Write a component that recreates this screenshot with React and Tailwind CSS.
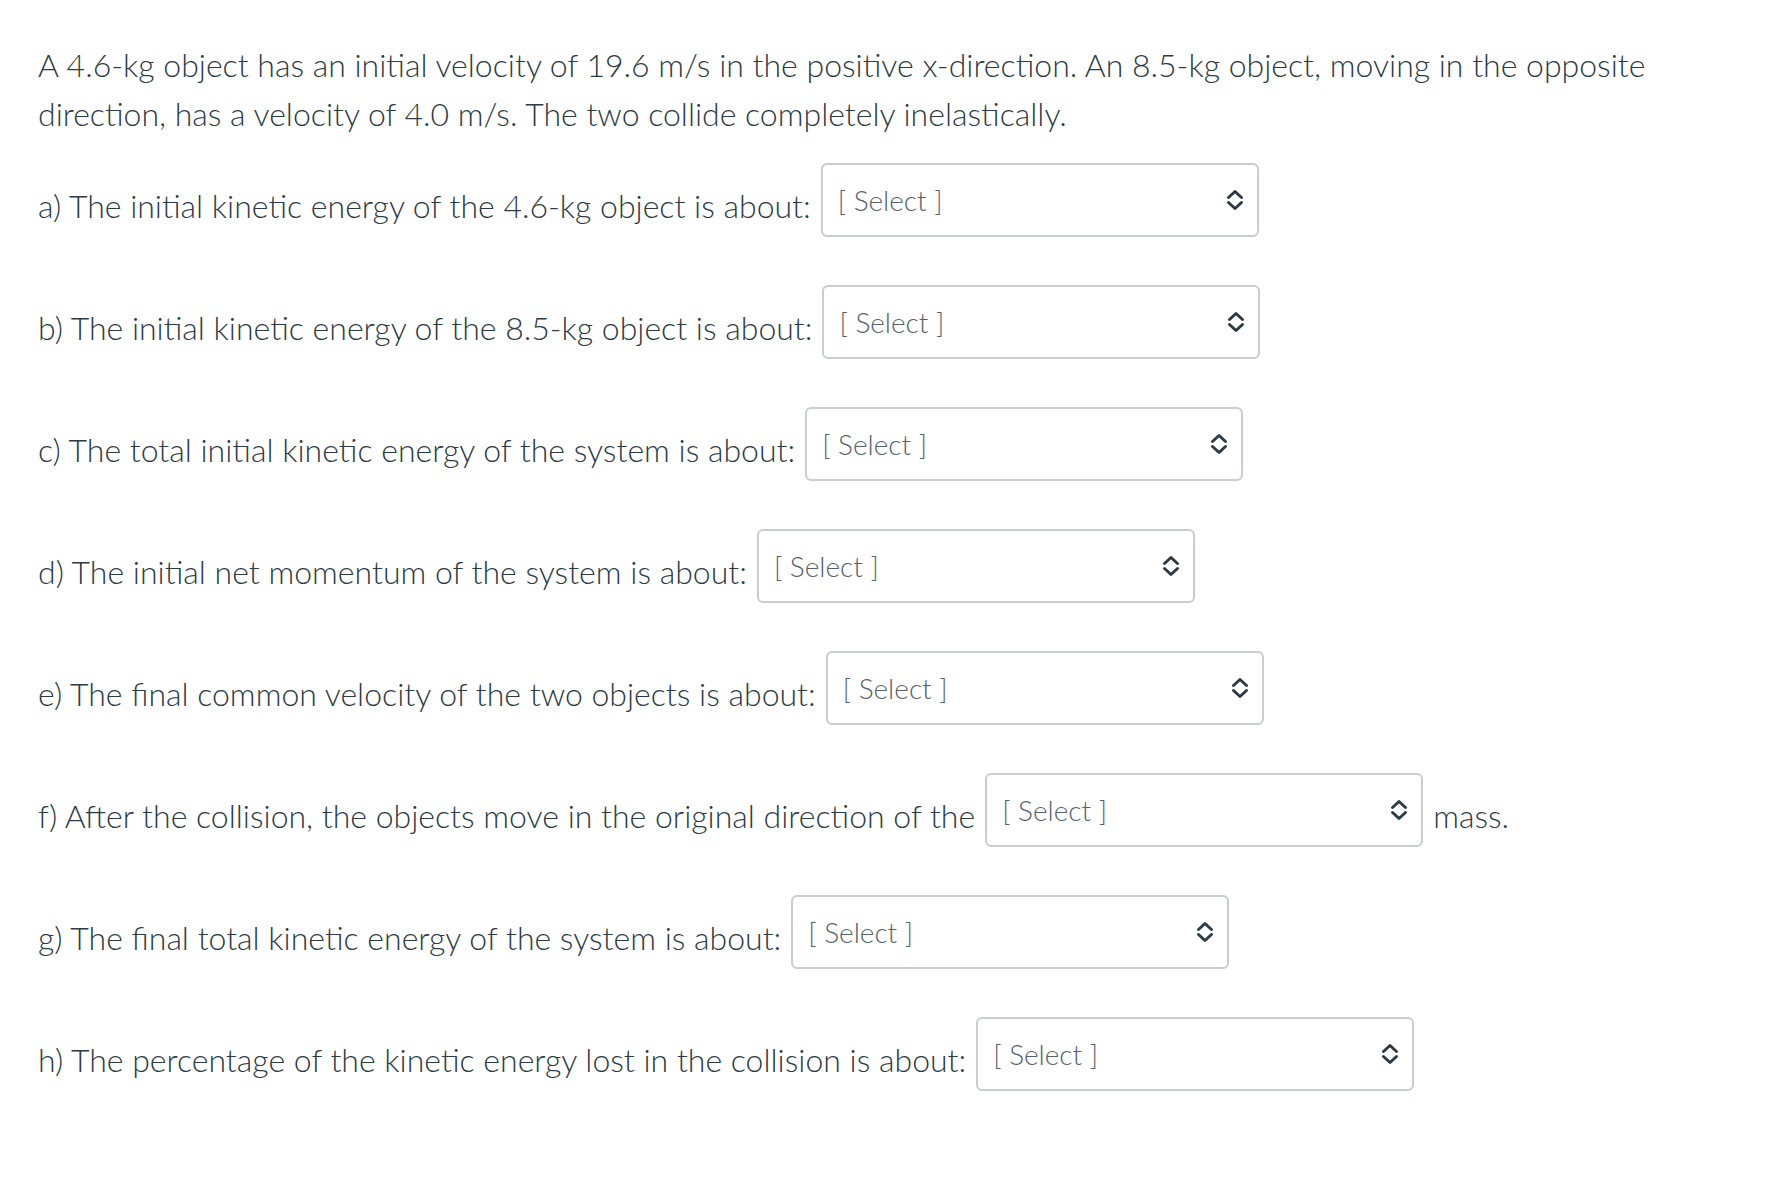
import React from 'react';

const rows = [
  { label: 'a) The initial kinetic energy of the 4.6-kg object is about:' },
  { label: 'b) The initial kinetic energy of the 8.5-kg object is about:' },
  { label: 'c) The total initial kinetic energy of the system is about:' },
  { label: 'd) The initial net momentum of the system is about:' },
  { label: 'e) The final common velocity of the two objects is about:' },
  { label: 'f) After the collision, the objects move in the original direction of the', suffix: 'mass.' },
  { label: 'g) The final total kinetic energy of the system is about:' },
  { label: 'h) The percentage of the kinetic energy lost in the collision is about:' },
];

const Chevrons = () => (
  <svg width="18" height="22" viewBox="0 0 18 22" fill="none" stroke="#2d3b45" strokeWidth="3" strokeLinecap="round" strokeLinejoin="round">
    <path d="M2.5 8.5 L9 2.5 L15.5 8.5" />
    <path d="M2.5 13.5 L9 19.5 L15.5 13.5" />
  </svg>
);

const SelectBox = () => (
  <div className="flex h-[74px] w-[438px] shrink-0 items-center justify-between rounded-[6px] border-2 border-[#c7cdd1] bg-white pl-[15px] pr-[13px]">
    <span className="text-[28px] leading-[49px] text-[#56626b]">[ Select ]</span>
    <Chevrons />
  </div>
);

export default function App() {
  return (
    <div
      className="min-h-screen bg-white pl-[38px] pr-[30px] pt-[40px] text-[32px] font-light text-[#2d3b45]"
      style={{ fontFamily: 'Lato, "Noto Sans", sans-serif' }}
    >
      <p className="leading-[49px]">
        A 4.6-kg object has an initial velocity of 19.6 m/s in the positive x-direction. An 8.5-kg object, moving in the opposite direction, has a velocity of 4.0 m/s. The two collide completely inelastically.
      </p>

      <div className="mt-[25px] flex flex-col gap-[48px]">
        {rows.map((row, i) => (
          <div key={i} className="flex items-start gap-[10px]">
            <span className="mt-[18px] whitespace-nowrap leading-[49px]">{row.label}</span>
            <SelectBox />
            {row.suffix && <span className="mt-[18px] leading-[49px]">{row.suffix}</span>}
          </div>
        ))}
      </div>
    </div>
  );
}
